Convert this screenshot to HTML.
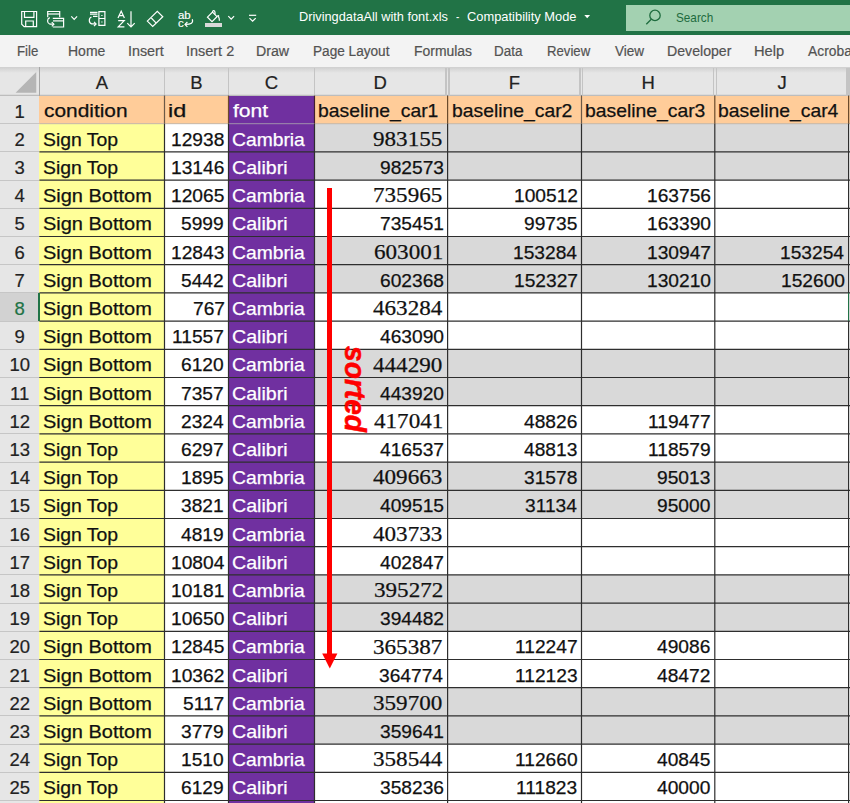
<!DOCTYPE html><html><head><meta charset="utf-8"><style>
*{margin:0;padding:0;box-sizing:border-box}
html,body{width:850px;height:803px;overflow:hidden;background:#fff}
body{position:relative;font-family:"Liberation Sans",sans-serif}
.a{position:absolute}
.t{position:absolute;white-space:nowrap;line-height:1}
.s{-webkit-text-stroke:0.25px currentColor}

</style></head><body>
<div class="a" style="left:0;top:0;width:850px;height:35px;background:#217346"></div>
<div class="a" style="left:625.5px;top:4.8px;width:240px;height:26px;background:#A3D1B1"></div>
<svg class="a" style="left:0;top:0" width="850" height="35" viewBox="0 0 850 35" fill="none" stroke="#fff" stroke-width="1.2"><path d="M21.7 11.5H36.6V26.6H24.1L21.7 24.2Z"/><path d="M24.5 11.5V17.4H33.9V11.5"/><path d="M25.7 26.6V21H33.3V26.6"/><path d="M47.7 17.2V11.5H59.7V17.2"/><path d="M47.7 14H59.7"/><path d="M52.8 18.3H63.6V27H52.8"/><path d="M53 20.9H63.6"/><path d="M49.8 17.6C46.8 18.8 46.8 23 50 24.2H54"/><path d="M51.8 22.1L53.9 24.2L51.8 26.3"/><path d="M71.3 16.4l2.9 2.9 2.9-2.9"/><path d="M90 12.4h7.5M90 14.2h7.5M93 16.4h4.5"/><path d="M98.9 11.6h6v13.8h-6z M98.9 18.5h6"/><path d="M101.9 15v1M101.9 21.5v1"/><path d="M91.5 17C88.6 18 88.5 22.8 91.7 23.9h4"/><path d="M94 21.8l2.1 2.1-2.1 2.1"/><path d="M118 18l3.2-6.8 3.2 6.8M119.2 15.6h4"/><path d="M118.2 20.6h6l-6 6.2h6.2"/><path d="M131 11.2v15.5M127.3 23.2l3.7 3.7 3.7-3.7"/><path d="M147.3 21.1L157.3 11.4L162.8 16.8L152.7 26.5Z"/><path d="M151.3 18L156 22.9"/><path d="M228.3 16.2l2.9 2.9 2.9-2.9"/><path d="M249 15.3h7.2"/><path d="M249.5 18.1l3.1 3.1 3.1-3.1"/><path d="M192.3 19.3c1.2 3.6-1.2 5.1-6.9 5.1"/><path d="M187.4 22l-2.4 2.4 2.4 2.4"/><path d="M207.5 17.2L212.5 12.2L217 16.7L212 21.7Z"/><path d="M212.5 12.2C212.3 10.2 214.8 10 215 12.4V14.6"/><path d="M218.4 16.6C219.2 17.6 219.4 19 219.4 20.8"/><circle cx="218.2" cy="16" r="1.1" fill="#fff" stroke="none"/></svg>
<div class="t" style="left:178.3px;top:10.6px;font-size:10.6px;font-weight:normal;color:#fff;line-height:8.6px;transform:scaleX(1.08);-webkit-text-stroke:0.15px #fff;transform-origin:0 0">ab<br>c</div>
<div class="a" style="left:204.9px;top:23.1px;width:17px;height:4.3px;background:#D9D9D9"></div>
<svg class="a" style="left:0;top:0" width="850" height="35" fill="none" stroke="#1E6B3E" stroke-width="1.3"><circle cx="655" cy="15.4" r="5.2"/><path d="M651.3 19.2l-5 5"/></svg>
<svg class="a" style="left:0;top:0" width="850" height="35"><path d="M584.3 15H590.1L587.2 18.2Z" fill="#fff"/></svg>
<div class="a" style="left:0;top:35px;width:850px;height:32px;background:#F3F3F3"></div>
<div class="a" style="left:0;top:67px;width:850px;height:28.5px;background:#E6E6E6"></div>
<div class="a" style="left:0;top:66.8px;width:850px;height:6px;background:linear-gradient(#CFCFCF,#E6E6E6)"></div>
<div class="a" style="left:0;top:95.5px;width:39.4px;height:707.5px;background:#E6E6E6"></div>
<svg class="a" style="left:0;top:0" width="40" height="100"><path d="M15.6 92.75L36.25 72V92.75z" fill="#B5B5B5"/></svg>
<div class="a" style="left:0;top:0"><svg width="850" height="100"><path d="M0 95.4H850" stroke="#BDBDBD" stroke-width="1.3"/></svg></div>
<div class="a" style="left:38.8px;top:68px;width:1.2px;height:27.5px;background:#C4C4C4"></div>
<div class="a" style="left:163.9px;top:68px;width:1.2px;height:27.5px;background:#C4C4C4"></div>
<div class="a" style="left:227.9px;top:68px;width:1.2px;height:27.5px;background:#C4C4C4"></div>
<div class="a" style="left:313.9px;top:68px;width:1.2px;height:27.5px;background:#C4C4C4"></div>
<div class="a" style="left:445.4px;top:68px;width:1.2px;height:27.5px;background:#C4C4C4"></div>
<div class="a" style="left:448.4px;top:68px;width:1.2px;height:27.5px;background:#C4C4C4"></div>
<div class="a" style="left:579.4px;top:68px;width:1.2px;height:27.5px;background:#C4C4C4"></div>
<div class="a" style="left:582.1999999999999px;top:68px;width:1.2px;height:27.5px;background:#C4C4C4"></div>
<div class="a" style="left:712.9px;top:68px;width:1.2px;height:27.5px;background:#C4C4C4"></div>
<div class="a" style="left:715.6999999999999px;top:68px;width:1.2px;height:27.5px;background:#C4C4C4"></div>
<div class="a" style="left:846.4px;top:68px;width:1.2px;height:27.5px;background:#C4C4C4"></div>
<div class="a" style="left:848.4px;top:68px;width:1.2px;height:27.5px;background:#C4C4C4"></div>
<div class="t" style="left:39.4px;width:125.1px;top:73.94px;text-align:center;font-size:18.5px;color:#222;-webkit-text-stroke:0.2px #222">A</div>
<div class="t" style="left:164.5px;width:64.0px;top:73.94px;text-align:center;font-size:18.5px;color:#222;-webkit-text-stroke:0.2px #222">B</div>
<div class="t" style="left:228.5px;width:86.0px;top:73.94px;text-align:center;font-size:18.5px;color:#222;-webkit-text-stroke:0.2px #222">C</div>
<div class="t" style="left:314.5px;width:131.5px;top:73.94px;text-align:center;font-size:18.5px;color:#222;-webkit-text-stroke:0.2px #222">D</div>
<div class="t" style="left:449px;width:131px;top:73.94px;text-align:center;font-size:18.5px;color:#222;-webkit-text-stroke:0.2px #222">F</div>
<div class="t" style="left:582.8px;width:130.70000000000005px;top:73.94px;text-align:center;font-size:18.5px;color:#222;-webkit-text-stroke:0.2px #222">H</div>
<div class="t" style="left:716.3px;width:131.70000000000005px;top:73.94px;text-align:center;font-size:18.5px;color:#222;-webkit-text-stroke:0.2px #222">J</div>
<div class="a" style="left:0;top:123.10000000000001px;width:39.4px;height:1.2px;background:#C6C6C6"></div>
<div class="t" style="left:0;width:39.4px;top:102.64px;text-align:center;font-size:18.5px;color:#222;-webkit-text-stroke:0.2px #222">1</div>
<div class="a" style="left:0;top:151.3px;width:39.4px;height:1.2px;background:#C6C6C6"></div>
<div class="t" style="left:0;width:39.4px;top:130.84px;text-align:center;font-size:18.5px;color:#222;-webkit-text-stroke:0.2px #222">2</div>
<div class="a" style="left:0;top:179.5px;width:39.4px;height:1.2px;background:#C6C6C6"></div>
<div class="t" style="left:0;width:39.4px;top:159.04px;text-align:center;font-size:18.5px;color:#222;-webkit-text-stroke:0.2px #222">3</div>
<div class="a" style="left:0;top:207.7px;width:39.4px;height:1.2px;background:#C6C6C6"></div>
<div class="t" style="left:0;width:39.4px;top:187.24px;text-align:center;font-size:18.5px;color:#222;-webkit-text-stroke:0.2px #222">4</div>
<div class="a" style="left:0;top:235.9px;width:39.4px;height:1.2px;background:#C6C6C6"></div>
<div class="t" style="left:0;width:39.4px;top:215.44px;text-align:center;font-size:18.5px;color:#222;-webkit-text-stroke:0.2px #222">5</div>
<div class="a" style="left:0;top:264.09999999999997px;width:39.4px;height:1.2px;background:#C6C6C6"></div>
<div class="t" style="left:0;width:39.4px;top:243.64px;text-align:center;font-size:18.5px;color:#222;-webkit-text-stroke:0.2px #222">6</div>
<div class="a" style="left:0;top:292.29999999999995px;width:39.4px;height:1.2px;background:#C6C6C6"></div>
<div class="t" style="left:0;width:39.4px;top:271.84px;text-align:center;font-size:18.5px;color:#222;-webkit-text-stroke:0.2px #222">7</div>
<div class="a" style="left:0;top:292.9px;width:39.4px;height:28.2px;background:#D2D2D2"></div>
<div class="a" style="left:0;top:320.49999999999994px;width:39.4px;height:1.2px;background:#C6C6C6"></div>
<div class="t" style="left:0;width:39.4px;top:300.04px;text-align:center;font-size:18.5px;color:#217346;-webkit-text-stroke:0.2px #217346">8</div>
<div class="a" style="left:0;top:348.7px;width:39.4px;height:1.2px;background:#C6C6C6"></div>
<div class="t" style="left:0;width:39.4px;top:328.24px;text-align:center;font-size:18.5px;color:#222;-webkit-text-stroke:0.2px #222">9</div>
<div class="a" style="left:0;top:376.8999999999999px;width:39.4px;height:1.2px;background:#C6C6C6"></div>
<div class="t" style="left:0;width:39.4px;top:356.44px;text-align:center;font-size:18.5px;color:#222;-webkit-text-stroke:0.2px #222">10</div>
<div class="a" style="left:0;top:405.09999999999997px;width:39.4px;height:1.2px;background:#C6C6C6"></div>
<div class="t" style="left:0;width:39.4px;top:384.64px;text-align:center;font-size:18.5px;color:#222;-webkit-text-stroke:0.2px #222">11</div>
<div class="a" style="left:0;top:433.29999999999995px;width:39.4px;height:1.2px;background:#C6C6C6"></div>
<div class="t" style="left:0;width:39.4px;top:412.84px;text-align:center;font-size:18.5px;color:#222;-webkit-text-stroke:0.2px #222">12</div>
<div class="a" style="left:0;top:461.49999999999994px;width:39.4px;height:1.2px;background:#C6C6C6"></div>
<div class="t" style="left:0;width:39.4px;top:441.04px;text-align:center;font-size:18.5px;color:#222;-webkit-text-stroke:0.2px #222">13</div>
<div class="a" style="left:0;top:489.69999999999993px;width:39.4px;height:1.2px;background:#C6C6C6"></div>
<div class="t" style="left:0;width:39.4px;top:469.24px;text-align:center;font-size:18.5px;color:#222;-webkit-text-stroke:0.2px #222">14</div>
<div class="a" style="left:0;top:517.9px;width:39.4px;height:1.2px;background:#C6C6C6"></div>
<div class="t" style="left:0;width:39.4px;top:497.44px;text-align:center;font-size:18.5px;color:#222;-webkit-text-stroke:0.2px #222">15</div>
<div class="a" style="left:0;top:546.1px;width:39.4px;height:1.2px;background:#C6C6C6"></div>
<div class="t" style="left:0;width:39.4px;top:525.64px;text-align:center;font-size:18.5px;color:#222;-webkit-text-stroke:0.2px #222">16</div>
<div class="a" style="left:0;top:574.3000000000001px;width:39.4px;height:1.2px;background:#C6C6C6"></div>
<div class="t" style="left:0;width:39.4px;top:553.84px;text-align:center;font-size:18.5px;color:#222;-webkit-text-stroke:0.2px #222">17</div>
<div class="a" style="left:0;top:602.5px;width:39.4px;height:1.2px;background:#C6C6C6"></div>
<div class="t" style="left:0;width:39.4px;top:582.04px;text-align:center;font-size:18.5px;color:#222;-webkit-text-stroke:0.2px #222">18</div>
<div class="a" style="left:0;top:630.6999999999999px;width:39.4px;height:1.2px;background:#C6C6C6"></div>
<div class="t" style="left:0;width:39.4px;top:610.24px;text-align:center;font-size:18.5px;color:#222;-webkit-text-stroke:0.2px #222">19</div>
<div class="a" style="left:0;top:658.9px;width:39.4px;height:1.2px;background:#C6C6C6"></div>
<div class="t" style="left:0;width:39.4px;top:638.44px;text-align:center;font-size:18.5px;color:#222;-webkit-text-stroke:0.2px #222">20</div>
<div class="a" style="left:0;top:687.1px;width:39.4px;height:1.2px;background:#C6C6C6"></div>
<div class="t" style="left:0;width:39.4px;top:666.64px;text-align:center;font-size:18.5px;color:#222;-webkit-text-stroke:0.2px #222">21</div>
<div class="a" style="left:0;top:715.3px;width:39.4px;height:1.2px;background:#C6C6C6"></div>
<div class="t" style="left:0;width:39.4px;top:694.84px;text-align:center;font-size:18.5px;color:#222;-webkit-text-stroke:0.2px #222">22</div>
<div class="a" style="left:0;top:743.5px;width:39.4px;height:1.2px;background:#C6C6C6"></div>
<div class="t" style="left:0;width:39.4px;top:723.04px;text-align:center;font-size:18.5px;color:#222;-webkit-text-stroke:0.2px #222">23</div>
<div class="a" style="left:0;top:771.7px;width:39.4px;height:1.2px;background:#C6C6C6"></div>
<div class="t" style="left:0;width:39.4px;top:751.24px;text-align:center;font-size:18.5px;color:#222;-webkit-text-stroke:0.2px #222">24</div>
<div class="a" style="left:0;top:799.9px;width:39.4px;height:1.2px;background:#C6C6C6"></div>
<div class="t" style="left:0;width:39.4px;top:779.44px;text-align:center;font-size:18.5px;color:#222;-webkit-text-stroke:0.2px #222">25</div>
<div class="a" style="left:39px;top:67px;width:1px;height:736px;background:#A6A6A6"></div>
<div class="a" style="left:39.4px;top:95.5px;width:125.1px;height:28.2px;background:#FFCC99"></div>
<div class="a" style="left:164.5px;top:95.5px;width:64.0px;height:28.2px;background:#FFCC99"></div>
<div class="a" style="left:228.5px;top:95.5px;width:86.0px;height:28.2px;background:#7030A0"></div>
<div class="a" style="left:314.5px;top:95.5px;width:133.10000000000002px;height:28.2px;background:#FFCC99"></div>
<div class="a" style="left:447.6px;top:95.5px;width:133.89999999999998px;height:28.2px;background:#FFCC99"></div>
<div class="a" style="left:581.5px;top:95.5px;width:133.29999999999995px;height:28.2px;background:#FFCC99"></div>
<div class="a" style="left:714.8px;top:95.5px;width:133.80000000000007px;height:28.2px;background:#FFCC99"></div>
<div class="a" style="left:848.6px;top:95.5px;width:141.39999999999998px;height:28.2px;background:#FFCC99"></div>
<div class="a" style="left:39.4px;top:123.7px;width:125.1px;height:28.2px;background:#FFFF99"></div>
<div class="a" style="left:164.5px;top:123.7px;width:64.0px;height:28.2px;background:#FFFFFF"></div>
<div class="a" style="left:228.5px;top:123.7px;width:86.0px;height:28.2px;background:#7030A0"></div>
<div class="a" style="left:314.5px;top:123.7px;width:133.10000000000002px;height:28.2px;background:#D9D9D9"></div>
<div class="a" style="left:447.6px;top:123.7px;width:133.89999999999998px;height:28.2px;background:#D9D9D9"></div>
<div class="a" style="left:581.5px;top:123.7px;width:133.29999999999995px;height:28.2px;background:#D9D9D9"></div>
<div class="a" style="left:714.8px;top:123.7px;width:133.80000000000007px;height:28.2px;background:#D9D9D9"></div>
<div class="a" style="left:848.6px;top:123.7px;width:141.39999999999998px;height:28.2px;background:#FFFFFF"></div>
<div class="a" style="left:39.4px;top:151.9px;width:125.1px;height:28.2px;background:#FFFF99"></div>
<div class="a" style="left:164.5px;top:151.9px;width:64.0px;height:28.2px;background:#FFFFFF"></div>
<div class="a" style="left:228.5px;top:151.9px;width:86.0px;height:28.2px;background:#7030A0"></div>
<div class="a" style="left:314.5px;top:151.9px;width:133.10000000000002px;height:28.2px;background:#D9D9D9"></div>
<div class="a" style="left:447.6px;top:151.9px;width:133.89999999999998px;height:28.2px;background:#D9D9D9"></div>
<div class="a" style="left:581.5px;top:151.9px;width:133.29999999999995px;height:28.2px;background:#D9D9D9"></div>
<div class="a" style="left:714.8px;top:151.9px;width:133.80000000000007px;height:28.2px;background:#D9D9D9"></div>
<div class="a" style="left:848.6px;top:151.9px;width:141.39999999999998px;height:28.2px;background:#FFFFFF"></div>
<div class="a" style="left:39.4px;top:180.1px;width:125.1px;height:28.2px;background:#FFFF99"></div>
<div class="a" style="left:164.5px;top:180.1px;width:64.0px;height:28.2px;background:#FFFFFF"></div>
<div class="a" style="left:228.5px;top:180.1px;width:86.0px;height:28.2px;background:#7030A0"></div>
<div class="a" style="left:314.5px;top:180.1px;width:133.10000000000002px;height:28.2px;background:#FFFFFF"></div>
<div class="a" style="left:447.6px;top:180.1px;width:133.89999999999998px;height:28.2px;background:#FFFFFF"></div>
<div class="a" style="left:581.5px;top:180.1px;width:133.29999999999995px;height:28.2px;background:#FFFFFF"></div>
<div class="a" style="left:714.8px;top:180.1px;width:133.80000000000007px;height:28.2px;background:#FFFFFF"></div>
<div class="a" style="left:848.6px;top:180.1px;width:141.39999999999998px;height:28.2px;background:#FFFFFF"></div>
<div class="a" style="left:39.4px;top:208.3px;width:125.1px;height:28.2px;background:#FFFF99"></div>
<div class="a" style="left:164.5px;top:208.3px;width:64.0px;height:28.2px;background:#FFFFFF"></div>
<div class="a" style="left:228.5px;top:208.3px;width:86.0px;height:28.2px;background:#7030A0"></div>
<div class="a" style="left:314.5px;top:208.3px;width:133.10000000000002px;height:28.2px;background:#FFFFFF"></div>
<div class="a" style="left:447.6px;top:208.3px;width:133.89999999999998px;height:28.2px;background:#FFFFFF"></div>
<div class="a" style="left:581.5px;top:208.3px;width:133.29999999999995px;height:28.2px;background:#FFFFFF"></div>
<div class="a" style="left:714.8px;top:208.3px;width:133.80000000000007px;height:28.2px;background:#FFFFFF"></div>
<div class="a" style="left:848.6px;top:208.3px;width:141.39999999999998px;height:28.2px;background:#FFFFFF"></div>
<div class="a" style="left:39.4px;top:236.5px;width:125.1px;height:28.2px;background:#FFFF99"></div>
<div class="a" style="left:164.5px;top:236.5px;width:64.0px;height:28.2px;background:#FFFFFF"></div>
<div class="a" style="left:228.5px;top:236.5px;width:86.0px;height:28.2px;background:#7030A0"></div>
<div class="a" style="left:314.5px;top:236.5px;width:133.10000000000002px;height:28.2px;background:#D9D9D9"></div>
<div class="a" style="left:447.6px;top:236.5px;width:133.89999999999998px;height:28.2px;background:#D9D9D9"></div>
<div class="a" style="left:581.5px;top:236.5px;width:133.29999999999995px;height:28.2px;background:#D9D9D9"></div>
<div class="a" style="left:714.8px;top:236.5px;width:133.80000000000007px;height:28.2px;background:#D9D9D9"></div>
<div class="a" style="left:848.6px;top:236.5px;width:141.39999999999998px;height:28.2px;background:#FFFFFF"></div>
<div class="a" style="left:39.4px;top:264.7px;width:125.1px;height:28.2px;background:#FFFF99"></div>
<div class="a" style="left:164.5px;top:264.7px;width:64.0px;height:28.2px;background:#FFFFFF"></div>
<div class="a" style="left:228.5px;top:264.7px;width:86.0px;height:28.2px;background:#7030A0"></div>
<div class="a" style="left:314.5px;top:264.7px;width:133.10000000000002px;height:28.2px;background:#D9D9D9"></div>
<div class="a" style="left:447.6px;top:264.7px;width:133.89999999999998px;height:28.2px;background:#D9D9D9"></div>
<div class="a" style="left:581.5px;top:264.7px;width:133.29999999999995px;height:28.2px;background:#D9D9D9"></div>
<div class="a" style="left:714.8px;top:264.7px;width:133.80000000000007px;height:28.2px;background:#D9D9D9"></div>
<div class="a" style="left:848.6px;top:264.7px;width:141.39999999999998px;height:28.2px;background:#FFFFFF"></div>
<div class="a" style="left:39.4px;top:292.9px;width:125.1px;height:28.2px;background:#FFFF99"></div>
<div class="a" style="left:164.5px;top:292.9px;width:64.0px;height:28.2px;background:#FFFFFF"></div>
<div class="a" style="left:228.5px;top:292.9px;width:86.0px;height:28.2px;background:#7030A0"></div>
<div class="a" style="left:314.5px;top:292.9px;width:133.10000000000002px;height:28.2px;background:#FFFFFF"></div>
<div class="a" style="left:447.6px;top:292.9px;width:133.89999999999998px;height:28.2px;background:#FFFFFF"></div>
<div class="a" style="left:581.5px;top:292.9px;width:133.29999999999995px;height:28.2px;background:#FFFFFF"></div>
<div class="a" style="left:714.8px;top:292.9px;width:133.80000000000007px;height:28.2px;background:#FFFFFF"></div>
<div class="a" style="left:848.6px;top:292.9px;width:141.39999999999998px;height:28.2px;background:#FFFFFF"></div>
<div class="a" style="left:39.4px;top:321.1px;width:125.1px;height:28.2px;background:#FFFF99"></div>
<div class="a" style="left:164.5px;top:321.1px;width:64.0px;height:28.2px;background:#FFFFFF"></div>
<div class="a" style="left:228.5px;top:321.1px;width:86.0px;height:28.2px;background:#7030A0"></div>
<div class="a" style="left:314.5px;top:321.1px;width:133.10000000000002px;height:28.2px;background:#FFFFFF"></div>
<div class="a" style="left:447.6px;top:321.1px;width:133.89999999999998px;height:28.2px;background:#FFFFFF"></div>
<div class="a" style="left:581.5px;top:321.1px;width:133.29999999999995px;height:28.2px;background:#FFFFFF"></div>
<div class="a" style="left:714.8px;top:321.1px;width:133.80000000000007px;height:28.2px;background:#FFFFFF"></div>
<div class="a" style="left:848.6px;top:321.1px;width:141.39999999999998px;height:28.2px;background:#FFFFFF"></div>
<div class="a" style="left:39.4px;top:349.29999999999995px;width:125.1px;height:28.2px;background:#FFFF99"></div>
<div class="a" style="left:164.5px;top:349.29999999999995px;width:64.0px;height:28.2px;background:#FFFFFF"></div>
<div class="a" style="left:228.5px;top:349.29999999999995px;width:86.0px;height:28.2px;background:#7030A0"></div>
<div class="a" style="left:314.5px;top:349.29999999999995px;width:133.10000000000002px;height:28.2px;background:#D9D9D9"></div>
<div class="a" style="left:447.6px;top:349.29999999999995px;width:133.89999999999998px;height:28.2px;background:#D9D9D9"></div>
<div class="a" style="left:581.5px;top:349.29999999999995px;width:133.29999999999995px;height:28.2px;background:#D9D9D9"></div>
<div class="a" style="left:714.8px;top:349.29999999999995px;width:133.80000000000007px;height:28.2px;background:#D9D9D9"></div>
<div class="a" style="left:848.6px;top:349.29999999999995px;width:141.39999999999998px;height:28.2px;background:#FFFFFF"></div>
<div class="a" style="left:39.4px;top:377.5px;width:125.1px;height:28.2px;background:#FFFF99"></div>
<div class="a" style="left:164.5px;top:377.5px;width:64.0px;height:28.2px;background:#FFFFFF"></div>
<div class="a" style="left:228.5px;top:377.5px;width:86.0px;height:28.2px;background:#7030A0"></div>
<div class="a" style="left:314.5px;top:377.5px;width:133.10000000000002px;height:28.2px;background:#D9D9D9"></div>
<div class="a" style="left:447.6px;top:377.5px;width:133.89999999999998px;height:28.2px;background:#D9D9D9"></div>
<div class="a" style="left:581.5px;top:377.5px;width:133.29999999999995px;height:28.2px;background:#D9D9D9"></div>
<div class="a" style="left:714.8px;top:377.5px;width:133.80000000000007px;height:28.2px;background:#D9D9D9"></div>
<div class="a" style="left:848.6px;top:377.5px;width:141.39999999999998px;height:28.2px;background:#FFFFFF"></div>
<div class="a" style="left:39.4px;top:405.7px;width:125.1px;height:28.2px;background:#FFFF99"></div>
<div class="a" style="left:164.5px;top:405.7px;width:64.0px;height:28.2px;background:#FFFFFF"></div>
<div class="a" style="left:228.5px;top:405.7px;width:86.0px;height:28.2px;background:#7030A0"></div>
<div class="a" style="left:314.5px;top:405.7px;width:133.10000000000002px;height:28.2px;background:#FFFFFF"></div>
<div class="a" style="left:447.6px;top:405.7px;width:133.89999999999998px;height:28.2px;background:#FFFFFF"></div>
<div class="a" style="left:581.5px;top:405.7px;width:133.29999999999995px;height:28.2px;background:#FFFFFF"></div>
<div class="a" style="left:714.8px;top:405.7px;width:133.80000000000007px;height:28.2px;background:#FFFFFF"></div>
<div class="a" style="left:848.6px;top:405.7px;width:141.39999999999998px;height:28.2px;background:#FFFFFF"></div>
<div class="a" style="left:39.4px;top:433.9px;width:125.1px;height:28.2px;background:#FFFF99"></div>
<div class="a" style="left:164.5px;top:433.9px;width:64.0px;height:28.2px;background:#FFFFFF"></div>
<div class="a" style="left:228.5px;top:433.9px;width:86.0px;height:28.2px;background:#7030A0"></div>
<div class="a" style="left:314.5px;top:433.9px;width:133.10000000000002px;height:28.2px;background:#FFFFFF"></div>
<div class="a" style="left:447.6px;top:433.9px;width:133.89999999999998px;height:28.2px;background:#FFFFFF"></div>
<div class="a" style="left:581.5px;top:433.9px;width:133.29999999999995px;height:28.2px;background:#FFFFFF"></div>
<div class="a" style="left:714.8px;top:433.9px;width:133.80000000000007px;height:28.2px;background:#FFFFFF"></div>
<div class="a" style="left:848.6px;top:433.9px;width:141.39999999999998px;height:28.2px;background:#FFFFFF"></div>
<div class="a" style="left:39.4px;top:462.09999999999997px;width:125.1px;height:28.2px;background:#FFFF99"></div>
<div class="a" style="left:164.5px;top:462.09999999999997px;width:64.0px;height:28.2px;background:#FFFFFF"></div>
<div class="a" style="left:228.5px;top:462.09999999999997px;width:86.0px;height:28.2px;background:#7030A0"></div>
<div class="a" style="left:314.5px;top:462.09999999999997px;width:133.10000000000002px;height:28.2px;background:#D9D9D9"></div>
<div class="a" style="left:447.6px;top:462.09999999999997px;width:133.89999999999998px;height:28.2px;background:#D9D9D9"></div>
<div class="a" style="left:581.5px;top:462.09999999999997px;width:133.29999999999995px;height:28.2px;background:#D9D9D9"></div>
<div class="a" style="left:714.8px;top:462.09999999999997px;width:133.80000000000007px;height:28.2px;background:#D9D9D9"></div>
<div class="a" style="left:848.6px;top:462.09999999999997px;width:141.39999999999998px;height:28.2px;background:#FFFFFF"></div>
<div class="a" style="left:39.4px;top:490.3px;width:125.1px;height:28.2px;background:#FFFF99"></div>
<div class="a" style="left:164.5px;top:490.3px;width:64.0px;height:28.2px;background:#FFFFFF"></div>
<div class="a" style="left:228.5px;top:490.3px;width:86.0px;height:28.2px;background:#7030A0"></div>
<div class="a" style="left:314.5px;top:490.3px;width:133.10000000000002px;height:28.2px;background:#D9D9D9"></div>
<div class="a" style="left:447.6px;top:490.3px;width:133.89999999999998px;height:28.2px;background:#D9D9D9"></div>
<div class="a" style="left:581.5px;top:490.3px;width:133.29999999999995px;height:28.2px;background:#D9D9D9"></div>
<div class="a" style="left:714.8px;top:490.3px;width:133.80000000000007px;height:28.2px;background:#D9D9D9"></div>
<div class="a" style="left:848.6px;top:490.3px;width:141.39999999999998px;height:28.2px;background:#FFFFFF"></div>
<div class="a" style="left:39.4px;top:518.5px;width:125.1px;height:28.2px;background:#FFFF99"></div>
<div class="a" style="left:164.5px;top:518.5px;width:64.0px;height:28.2px;background:#FFFFFF"></div>
<div class="a" style="left:228.5px;top:518.5px;width:86.0px;height:28.2px;background:#7030A0"></div>
<div class="a" style="left:314.5px;top:518.5px;width:133.10000000000002px;height:28.2px;background:#FFFFFF"></div>
<div class="a" style="left:447.6px;top:518.5px;width:133.89999999999998px;height:28.2px;background:#FFFFFF"></div>
<div class="a" style="left:581.5px;top:518.5px;width:133.29999999999995px;height:28.2px;background:#FFFFFF"></div>
<div class="a" style="left:714.8px;top:518.5px;width:133.80000000000007px;height:28.2px;background:#FFFFFF"></div>
<div class="a" style="left:848.6px;top:518.5px;width:141.39999999999998px;height:28.2px;background:#FFFFFF"></div>
<div class="a" style="left:39.4px;top:546.7px;width:125.1px;height:28.2px;background:#FFFF99"></div>
<div class="a" style="left:164.5px;top:546.7px;width:64.0px;height:28.2px;background:#FFFFFF"></div>
<div class="a" style="left:228.5px;top:546.7px;width:86.0px;height:28.2px;background:#7030A0"></div>
<div class="a" style="left:314.5px;top:546.7px;width:133.10000000000002px;height:28.2px;background:#FFFFFF"></div>
<div class="a" style="left:447.6px;top:546.7px;width:133.89999999999998px;height:28.2px;background:#FFFFFF"></div>
<div class="a" style="left:581.5px;top:546.7px;width:133.29999999999995px;height:28.2px;background:#FFFFFF"></div>
<div class="a" style="left:714.8px;top:546.7px;width:133.80000000000007px;height:28.2px;background:#FFFFFF"></div>
<div class="a" style="left:848.6px;top:546.7px;width:141.39999999999998px;height:28.2px;background:#FFFFFF"></div>
<div class="a" style="left:39.4px;top:574.9px;width:125.1px;height:28.2px;background:#FFFF99"></div>
<div class="a" style="left:164.5px;top:574.9px;width:64.0px;height:28.2px;background:#FFFFFF"></div>
<div class="a" style="left:228.5px;top:574.9px;width:86.0px;height:28.2px;background:#7030A0"></div>
<div class="a" style="left:314.5px;top:574.9px;width:133.10000000000002px;height:28.2px;background:#D9D9D9"></div>
<div class="a" style="left:447.6px;top:574.9px;width:133.89999999999998px;height:28.2px;background:#D9D9D9"></div>
<div class="a" style="left:581.5px;top:574.9px;width:133.29999999999995px;height:28.2px;background:#D9D9D9"></div>
<div class="a" style="left:714.8px;top:574.9px;width:133.80000000000007px;height:28.2px;background:#D9D9D9"></div>
<div class="a" style="left:848.6px;top:574.9px;width:141.39999999999998px;height:28.2px;background:#FFFFFF"></div>
<div class="a" style="left:39.4px;top:603.0999999999999px;width:125.1px;height:28.2px;background:#FFFF99"></div>
<div class="a" style="left:164.5px;top:603.0999999999999px;width:64.0px;height:28.2px;background:#FFFFFF"></div>
<div class="a" style="left:228.5px;top:603.0999999999999px;width:86.0px;height:28.2px;background:#7030A0"></div>
<div class="a" style="left:314.5px;top:603.0999999999999px;width:133.10000000000002px;height:28.2px;background:#D9D9D9"></div>
<div class="a" style="left:447.6px;top:603.0999999999999px;width:133.89999999999998px;height:28.2px;background:#D9D9D9"></div>
<div class="a" style="left:581.5px;top:603.0999999999999px;width:133.29999999999995px;height:28.2px;background:#D9D9D9"></div>
<div class="a" style="left:714.8px;top:603.0999999999999px;width:133.80000000000007px;height:28.2px;background:#D9D9D9"></div>
<div class="a" style="left:848.6px;top:603.0999999999999px;width:141.39999999999998px;height:28.2px;background:#FFFFFF"></div>
<div class="a" style="left:39.4px;top:631.3px;width:125.1px;height:28.2px;background:#FFFF99"></div>
<div class="a" style="left:164.5px;top:631.3px;width:64.0px;height:28.2px;background:#FFFFFF"></div>
<div class="a" style="left:228.5px;top:631.3px;width:86.0px;height:28.2px;background:#7030A0"></div>
<div class="a" style="left:314.5px;top:631.3px;width:133.10000000000002px;height:28.2px;background:#FFFFFF"></div>
<div class="a" style="left:447.6px;top:631.3px;width:133.89999999999998px;height:28.2px;background:#FFFFFF"></div>
<div class="a" style="left:581.5px;top:631.3px;width:133.29999999999995px;height:28.2px;background:#FFFFFF"></div>
<div class="a" style="left:714.8px;top:631.3px;width:133.80000000000007px;height:28.2px;background:#FFFFFF"></div>
<div class="a" style="left:848.6px;top:631.3px;width:141.39999999999998px;height:28.2px;background:#FFFFFF"></div>
<div class="a" style="left:39.4px;top:659.5px;width:125.1px;height:28.2px;background:#FFFF99"></div>
<div class="a" style="left:164.5px;top:659.5px;width:64.0px;height:28.2px;background:#FFFFFF"></div>
<div class="a" style="left:228.5px;top:659.5px;width:86.0px;height:28.2px;background:#7030A0"></div>
<div class="a" style="left:314.5px;top:659.5px;width:133.10000000000002px;height:28.2px;background:#FFFFFF"></div>
<div class="a" style="left:447.6px;top:659.5px;width:133.89999999999998px;height:28.2px;background:#FFFFFF"></div>
<div class="a" style="left:581.5px;top:659.5px;width:133.29999999999995px;height:28.2px;background:#FFFFFF"></div>
<div class="a" style="left:714.8px;top:659.5px;width:133.80000000000007px;height:28.2px;background:#FFFFFF"></div>
<div class="a" style="left:848.6px;top:659.5px;width:141.39999999999998px;height:28.2px;background:#FFFFFF"></div>
<div class="a" style="left:39.4px;top:687.6999999999999px;width:125.1px;height:28.2px;background:#FFFF99"></div>
<div class="a" style="left:164.5px;top:687.6999999999999px;width:64.0px;height:28.2px;background:#FFFFFF"></div>
<div class="a" style="left:228.5px;top:687.6999999999999px;width:86.0px;height:28.2px;background:#7030A0"></div>
<div class="a" style="left:314.5px;top:687.6999999999999px;width:133.10000000000002px;height:28.2px;background:#D9D9D9"></div>
<div class="a" style="left:447.6px;top:687.6999999999999px;width:133.89999999999998px;height:28.2px;background:#D9D9D9"></div>
<div class="a" style="left:581.5px;top:687.6999999999999px;width:133.29999999999995px;height:28.2px;background:#D9D9D9"></div>
<div class="a" style="left:714.8px;top:687.6999999999999px;width:133.80000000000007px;height:28.2px;background:#D9D9D9"></div>
<div class="a" style="left:848.6px;top:687.6999999999999px;width:141.39999999999998px;height:28.2px;background:#FFFFFF"></div>
<div class="a" style="left:39.4px;top:715.9px;width:125.1px;height:28.2px;background:#FFFF99"></div>
<div class="a" style="left:164.5px;top:715.9px;width:64.0px;height:28.2px;background:#FFFFFF"></div>
<div class="a" style="left:228.5px;top:715.9px;width:86.0px;height:28.2px;background:#7030A0"></div>
<div class="a" style="left:314.5px;top:715.9px;width:133.10000000000002px;height:28.2px;background:#D9D9D9"></div>
<div class="a" style="left:447.6px;top:715.9px;width:133.89999999999998px;height:28.2px;background:#D9D9D9"></div>
<div class="a" style="left:581.5px;top:715.9px;width:133.29999999999995px;height:28.2px;background:#D9D9D9"></div>
<div class="a" style="left:714.8px;top:715.9px;width:133.80000000000007px;height:28.2px;background:#D9D9D9"></div>
<div class="a" style="left:848.6px;top:715.9px;width:141.39999999999998px;height:28.2px;background:#FFFFFF"></div>
<div class="a" style="left:39.4px;top:744.1px;width:125.1px;height:28.2px;background:#FFFF99"></div>
<div class="a" style="left:164.5px;top:744.1px;width:64.0px;height:28.2px;background:#FFFFFF"></div>
<div class="a" style="left:228.5px;top:744.1px;width:86.0px;height:28.2px;background:#7030A0"></div>
<div class="a" style="left:314.5px;top:744.1px;width:133.10000000000002px;height:28.2px;background:#FFFFFF"></div>
<div class="a" style="left:447.6px;top:744.1px;width:133.89999999999998px;height:28.2px;background:#FFFFFF"></div>
<div class="a" style="left:581.5px;top:744.1px;width:133.29999999999995px;height:28.2px;background:#FFFFFF"></div>
<div class="a" style="left:714.8px;top:744.1px;width:133.80000000000007px;height:28.2px;background:#FFFFFF"></div>
<div class="a" style="left:848.6px;top:744.1px;width:141.39999999999998px;height:28.2px;background:#FFFFFF"></div>
<div class="a" style="left:39.4px;top:772.3px;width:125.1px;height:28.2px;background:#FFFF99"></div>
<div class="a" style="left:164.5px;top:772.3px;width:64.0px;height:28.2px;background:#FFFFFF"></div>
<div class="a" style="left:228.5px;top:772.3px;width:86.0px;height:28.2px;background:#7030A0"></div>
<div class="a" style="left:314.5px;top:772.3px;width:133.10000000000002px;height:28.2px;background:#FFFFFF"></div>
<div class="a" style="left:447.6px;top:772.3px;width:133.89999999999998px;height:28.2px;background:#FFFFFF"></div>
<div class="a" style="left:581.5px;top:772.3px;width:133.29999999999995px;height:28.2px;background:#FFFFFF"></div>
<div class="a" style="left:714.8px;top:772.3px;width:133.80000000000007px;height:28.2px;background:#FFFFFF"></div>
<div class="a" style="left:848.6px;top:772.3px;width:141.39999999999998px;height:28.2px;background:#FFFFFF"></div>
<div class="a" style="left:39.4px;top:800.5px;width:125.1px;height:5px;background:#FFFF99"></div>
<div class="a" style="left:164.5px;top:800.5px;width:64.0px;height:5px;background:#FFFFFF"></div>
<div class="a" style="left:228.5px;top:800.5px;width:86.0px;height:5px;background:#7030A0"></div>
<div class="a" style="left:314.5px;top:800.5px;width:133.10000000000002px;height:5px;background:#FFFFFF"></div>
<div class="a" style="left:447.6px;top:800.5px;width:133.89999999999998px;height:5px;background:#FFFFFF"></div>
<div class="a" style="left:581.5px;top:800.5px;width:133.29999999999995px;height:5px;background:#FFFFFF"></div>
<div class="a" style="left:714.8px;top:800.5px;width:133.80000000000007px;height:5px;background:#FFFFFF"></div>
<div class="a" style="left:848.6px;top:800.5px;width:141.39999999999998px;height:5px;background:#FFFFFF"></div>
<svg class="a" style="left:0;top:0" width="850" height="803" fill="none"><path d="M39.4 123.70H850" stroke="rgba(176,176,176,0.6)" stroke-width="1.3"/><path d="M39.4 151.90H850" stroke="#2e2e2e" stroke-width="1.2"/><path d="M39.4 180.10H850" stroke="#2e2e2e" stroke-width="1.2"/><path d="M39.4 208.30H850" stroke="#2e2e2e" stroke-width="1.2"/><path d="M39.4 236.50H850" stroke="#2e2e2e" stroke-width="1.2"/><path d="M39.4 264.70H850" stroke="#2e2e2e" stroke-width="1.2"/><path d="M39.4 292.90H850" stroke="#2e2e2e" stroke-width="1.2"/><path d="M39.4 321.10H850" stroke="#2e2e2e" stroke-width="1.2"/><path d="M39.4 349.30H850" stroke="#2e2e2e" stroke-width="1.2"/><path d="M39.4 377.50H850" stroke="#2e2e2e" stroke-width="1.2"/><path d="M39.4 405.70H850" stroke="#2e2e2e" stroke-width="1.2"/><path d="M39.4 433.90H850" stroke="#2e2e2e" stroke-width="1.2"/><path d="M39.4 462.10H850" stroke="#2e2e2e" stroke-width="1.2"/><path d="M39.4 490.30H850" stroke="#2e2e2e" stroke-width="1.2"/><path d="M39.4 518.50H850" stroke="#2e2e2e" stroke-width="1.2"/><path d="M39.4 546.70H850" stroke="#2e2e2e" stroke-width="1.2"/><path d="M39.4 574.90H850" stroke="#2e2e2e" stroke-width="1.2"/><path d="M39.4 603.10H850" stroke="#2e2e2e" stroke-width="1.2"/><path d="M39.4 631.30H850" stroke="#2e2e2e" stroke-width="1.2"/><path d="M39.4 659.50H850" stroke="#2e2e2e" stroke-width="1.2"/><path d="M39.4 687.70H850" stroke="#2e2e2e" stroke-width="1.2"/><path d="M39.4 715.90H850" stroke="#2e2e2e" stroke-width="1.2"/><path d="M39.4 744.10H850" stroke="#2e2e2e" stroke-width="1.2"/><path d="M39.4 772.30H850" stroke="#2e2e2e" stroke-width="1.2"/><path d="M39.4 800.50H850" stroke="#2e2e2e" stroke-width="1.2"/><path d="M164.5 95.5V123.7" stroke="rgba(50,25,0,0.72)" stroke-width="1.2"/><path d="M164.5 123.7V803" stroke="#2e2e2e" stroke-width="1.2"/><path d="M228.5 95.5V123.7" stroke="rgba(50,25,0,0.72)" stroke-width="1.2"/><path d="M228.5 123.7V803" stroke="#2e2e2e" stroke-width="1.2"/><path d="M314.5 95.5V123.7" stroke="rgba(50,25,0,0.72)" stroke-width="1.2"/><path d="M314.5 123.7V803" stroke="#2e2e2e" stroke-width="1.2"/><path d="M447.6 95.5V123.7" stroke="rgba(50,25,0,0.72)" stroke-width="1.2"/><path d="M447.6 123.7V803" stroke="#2e2e2e" stroke-width="1.2"/><path d="M581.5 95.5V123.7" stroke="rgba(50,25,0,0.72)" stroke-width="1.2"/><path d="M581.5 123.7V803" stroke="#2e2e2e" stroke-width="1.2"/><path d="M714.8 95.5V123.7" stroke="rgba(50,25,0,0.72)" stroke-width="1.2"/><path d="M714.8 123.7V803" stroke="#2e2e2e" stroke-width="1.2"/><path d="M848.6 95.5V123.7" stroke="rgba(50,25,0,0.72)" stroke-width="1.2"/><path d="M848.6 123.7V803" stroke="#2e2e2e" stroke-width="1.2"/></svg>
<div class="a" style="left:38.2px;top:292.9px;width:1.8px;height:28.2px;background:#217346"></div>
<div class="a" style="left:847.7px;top:292.9px;width:1.8px;height:28.2px;background:#217346"></div>
<div class="t" style="left:675.91px;top:11.23px;font-family:'Liberation Sans';font-size:13.2px;font-weight:normal;font-style:normal;color:#1E6B3E;transform:scaleX(0.8900);transform-origin:0 0;">Search</div>
<div class="t" style="left:299.03px;top:9.83px;font-family:'Liberation Sans';font-size:13.2px;font-weight:normal;font-style:normal;color:#fff;transform:scaleX(0.9673);transform-origin:0 0;">DrivingdataAll with font.xls</div>
<div class="t" style="left:456.00px;top:9.83px;font-family:'Liberation Sans';font-size:13.2px;font-weight:normal;font-style:normal;color:#fff;transform:scaleX(0.7500);transform-origin:0 0;">-</div>
<div class="t" style="left:467.00px;top:9.83px;font-family:'Liberation Sans';font-size:13.2px;font-weight:normal;font-style:normal;color:#fff;transform:scaleX(0.9768);transform-origin:0 0;">Compatibility Mode</div>
<div class="t" style="left:16.84px;top:44.52px;font-family:'Liberation Sans';font-size:13.8px;font-weight:normal;font-style:normal;color:#525252;transform:scaleX(0.9571);transform-origin:0 0;-webkit-text-stroke:0.2px #525252;">File</div>
<div class="t" style="left:67.89px;top:44.52px;font-family:'Liberation Sans';font-size:13.8px;font-weight:normal;font-style:normal;color:#525252;transform:scaleX(1.0139);transform-origin:0 0;-webkit-text-stroke:0.2px #525252;">Home</div>
<div class="t" style="left:128.36px;top:44.52px;font-family:'Liberation Sans';font-size:13.8px;font-weight:normal;font-style:normal;color:#525252;transform:scaleX(1.0382);transform-origin:0 0;-webkit-text-stroke:0.2px #525252;">Insert</div>
<div class="t" style="left:186.45px;top:44.52px;font-family:'Liberation Sans';font-size:13.8px;font-weight:normal;font-style:normal;color:#525252;transform:scaleX(1.0467);transform-origin:0 0;-webkit-text-stroke:0.2px #525252;">Insert 2</div>
<div class="t" style="left:256.17px;top:44.52px;font-family:'Liberation Sans';font-size:13.8px;font-weight:normal;font-style:normal;color:#525252;transform:scaleX(1.0281);transform-origin:0 0;-webkit-text-stroke:0.2px #525252;">Draw</div>
<div class="t" style="left:313.11px;top:44.52px;font-family:'Liberation Sans';font-size:13.8px;font-weight:normal;font-style:normal;color:#525252;transform:scaleX(0.9870);transform-origin:0 0;-webkit-text-stroke:0.2px #525252;">Page Layout</div>
<div class="t" style="left:413.79px;top:44.52px;font-family:'Liberation Sans';font-size:13.8px;font-weight:normal;font-style:normal;color:#525252;transform:scaleX(1.0089);transform-origin:0 0;-webkit-text-stroke:0.2px #525252;">Formulas</div>
<div class="t" style="left:494.33px;top:44.52px;font-family:'Liberation Sans';font-size:13.8px;font-weight:normal;font-style:normal;color:#525252;transform:scaleX(0.9724);transform-origin:0 0;-webkit-text-stroke:0.2px #525252;">Data</div>
<div class="t" style="left:547.25px;top:44.52px;font-family:'Liberation Sans';font-size:13.8px;font-weight:normal;font-style:normal;color:#525252;transform:scaleX(0.9533);transform-origin:0 0;-webkit-text-stroke:0.2px #525252;">Review</div>
<div class="t" style="left:615.30px;top:44.52px;font-family:'Liberation Sans';font-size:13.8px;font-weight:normal;font-style:normal;color:#525252;transform:scaleX(0.9800);transform-origin:0 0;-webkit-text-stroke:0.2px #525252;">View</div>
<div class="t" style="left:667.38px;top:44.52px;font-family:'Liberation Sans';font-size:13.8px;font-weight:normal;font-style:normal;color:#525252;transform:scaleX(1.0242);transform-origin:0 0;-webkit-text-stroke:0.2px #525252;">Developer</div>
<div class="t" style="left:754.34px;top:44.52px;font-family:'Liberation Sans';font-size:13.8px;font-weight:normal;font-style:normal;color:#525252;transform:scaleX(1.0630);transform-origin:0 0;-webkit-text-stroke:0.2px #525252;">Help</div>
<div class="t" style="left:808.10px;top:44.52px;font-family:'Liberation Sans';font-size:13.8px;font-weight:normal;font-style:normal;color:#525252;-webkit-text-stroke:0.2px #525252;">Acrobat</div>
<div class="t s" style="left:43.80px;top:102.04px;font-family:'Liberation Sans';font-size:18.5px;font-weight:normal;font-style:normal;color:#111;transform:scaleX(1.1288);transform-origin:0 0;">condition</div>
<div class="t s" style="left:167.63px;top:102.04px;font-family:'Liberation Sans';font-size:18.5px;font-weight:normal;font-style:normal;color:#111;transform:scaleX(1.2667);transform-origin:0 0;">id</div>
<div class="t s" style="left:233.10px;top:102.04px;font-family:'Liberation Sans';font-size:18.5px;font-weight:normal;font-style:normal;color:#fff;transform:scaleX(1.1419);transform-origin:0 0;">font</div>
<div class="t s" style="left:318.06px;top:102.04px;font-family:'Liberation Sans';font-size:18.5px;font-weight:normal;font-style:normal;color:#111;transform:scaleX(1.0447);transform-origin:0 0;">baseline_car1</div>
<div class="t s" style="left:451.56px;top:102.04px;font-family:'Liberation Sans';font-size:18.5px;font-weight:normal;font-style:normal;color:#111;transform:scaleX(1.0447);transform-origin:0 0;">baseline_car2</div>
<div class="t s" style="left:585.16px;top:102.04px;font-family:'Liberation Sans';font-size:18.5px;font-weight:normal;font-style:normal;color:#111;transform:scaleX(1.0447);transform-origin:0 0;">baseline_car3</div>
<div class="t s" style="left:718.46px;top:102.04px;font-family:'Liberation Sans';font-size:18.5px;font-weight:normal;font-style:normal;color:#111;transform:scaleX(1.0447);transform-origin:0 0;">baseline_car4</div>
<div class="t s" style="left:42.75px;top:130.74px;font-family:'Liberation Sans';font-size:18.5px;font-weight:normal;font-style:normal;color:#111;transform:scaleX(1.0486);transform-origin:0 0;">Sign Top</div>
<div class="t s" style="left:171.01px;top:130.74px;font-family:'Liberation Sans';font-size:18.5px;font-weight:normal;font-style:normal;color:#111;transform:scaleX(1.0370);transform-origin:0 0;">12938</div>
<div class="t s" style="left:231.86px;top:130.74px;font-family:'Liberation Sans';font-size:18.5px;font-weight:normal;font-style:normal;color:#fff;transform:scaleX(1.0420);transform-origin:0 0;">Cambria</div>
<div class="t s" style="left:373.30px;top:128.07px;font-family:'Liberation Serif';font-size:22px;font-weight:normal;font-style:normal;color:#111;transform:scaleX(1.0500);transform-origin:0 0;">983155</div>
<div class="t s" style="left:42.75px;top:158.94px;font-family:'Liberation Sans';font-size:18.5px;font-weight:normal;font-style:normal;color:#111;transform:scaleX(1.0486);transform-origin:0 0;">Sign Top</div>
<div class="t s" style="left:171.01px;top:158.94px;font-family:'Liberation Sans';font-size:18.5px;font-weight:normal;font-style:normal;color:#111;transform:scaleX(1.0370);transform-origin:0 0;">13146</div>
<div class="t s" style="left:231.84px;top:158.94px;font-family:'Liberation Sans';font-size:18.5px;font-weight:normal;font-style:normal;color:#fff;transform:scaleX(1.0588);transform-origin:0 0;">Calibri</div>
<div class="t s" style="left:379.74px;top:158.94px;font-family:'Liberation Sans';font-size:18.5px;font-weight:normal;font-style:normal;color:#111;transform:scaleX(1.0370);transform-origin:0 0;">982573</div>
<div class="t s" style="left:42.72px;top:187.14px;font-family:'Liberation Sans';font-size:18.5px;font-weight:normal;font-style:normal;color:#111;transform:scaleX(1.0798);transform-origin:0 0;">Sign Bottom</div>
<div class="t s" style="left:171.01px;top:187.14px;font-family:'Liberation Sans';font-size:18.5px;font-weight:normal;font-style:normal;color:#111;transform:scaleX(1.0370);transform-origin:0 0;">12065</div>
<div class="t s" style="left:231.86px;top:187.14px;font-family:'Liberation Sans';font-size:18.5px;font-weight:normal;font-style:normal;color:#fff;transform:scaleX(1.0420);transform-origin:0 0;">Cambria</div>
<div class="t s" style="left:373.30px;top:184.47px;font-family:'Liberation Serif';font-size:22px;font-weight:normal;font-style:normal;color:#111;transform:scaleX(1.0500);transform-origin:0 0;">735965</div>
<div class="t s" style="left:513.64px;top:187.14px;font-family:'Liberation Sans';font-size:18.5px;font-weight:normal;font-style:normal;color:#111;transform:scaleX(1.0370);transform-origin:0 0;">100512</div>
<div class="t s" style="left:646.94px;top:187.14px;font-family:'Liberation Sans';font-size:18.5px;font-weight:normal;font-style:normal;color:#111;transform:scaleX(1.0370);transform-origin:0 0;">163756</div>
<div class="t s" style="left:42.72px;top:215.34px;font-family:'Liberation Sans';font-size:18.5px;font-weight:normal;font-style:normal;color:#111;transform:scaleX(1.0798);transform-origin:0 0;">Sign Bottom</div>
<div class="t s" style="left:181.38px;top:215.34px;font-family:'Liberation Sans';font-size:18.5px;font-weight:normal;font-style:normal;color:#111;transform:scaleX(1.0370);transform-origin:0 0;">5999</div>
<div class="t s" style="left:231.84px;top:215.34px;font-family:'Liberation Sans';font-size:18.5px;font-weight:normal;font-style:normal;color:#fff;transform:scaleX(1.0588);transform-origin:0 0;">Calibri</div>
<div class="t s" style="left:379.74px;top:215.34px;font-family:'Liberation Sans';font-size:18.5px;font-weight:normal;font-style:normal;color:#111;transform:scaleX(1.0370);transform-origin:0 0;">735451</div>
<div class="t s" style="left:524.01px;top:215.34px;font-family:'Liberation Sans';font-size:18.5px;font-weight:normal;font-style:normal;color:#111;transform:scaleX(1.0370);transform-origin:0 0;">99735</div>
<div class="t s" style="left:646.94px;top:215.34px;font-family:'Liberation Sans';font-size:18.5px;font-weight:normal;font-style:normal;color:#111;transform:scaleX(1.0370);transform-origin:0 0;">163390</div>
<div class="t s" style="left:42.72px;top:243.54px;font-family:'Liberation Sans';font-size:18.5px;font-weight:normal;font-style:normal;color:#111;transform:scaleX(1.0798);transform-origin:0 0;">Sign Bottom</div>
<div class="t s" style="left:171.01px;top:243.54px;font-family:'Liberation Sans';font-size:18.5px;font-weight:normal;font-style:normal;color:#111;transform:scaleX(1.0370);transform-origin:0 0;">12843</div>
<div class="t s" style="left:231.86px;top:243.54px;font-family:'Liberation Sans';font-size:18.5px;font-weight:normal;font-style:normal;color:#fff;transform:scaleX(1.0420);transform-origin:0 0;">Cambria</div>
<div class="t s" style="left:374.35px;top:240.88px;font-family:'Liberation Serif';font-size:22px;font-weight:normal;font-style:normal;color:#111;transform:scaleX(1.0500);transform-origin:0 0;">603001</div>
<div class="t s" style="left:512.61px;top:243.54px;font-family:'Liberation Sans';font-size:18.5px;font-weight:normal;font-style:normal;color:#111;transform:scaleX(1.0370);transform-origin:0 0;">153284</div>
<div class="t s" style="left:646.94px;top:243.54px;font-family:'Liberation Sans';font-size:18.5px;font-weight:normal;font-style:normal;color:#111;transform:scaleX(1.0370);transform-origin:0 0;">130947</div>
<div class="t s" style="left:779.71px;top:243.54px;font-family:'Liberation Sans';font-size:18.5px;font-weight:normal;font-style:normal;color:#111;transform:scaleX(1.0370);transform-origin:0 0;">153254</div>
<div class="t s" style="left:42.72px;top:271.74px;font-family:'Liberation Sans';font-size:18.5px;font-weight:normal;font-style:normal;color:#111;transform:scaleX(1.0798);transform-origin:0 0;">Sign Bottom</div>
<div class="t s" style="left:181.38px;top:271.74px;font-family:'Liberation Sans';font-size:18.5px;font-weight:normal;font-style:normal;color:#111;transform:scaleX(1.0370);transform-origin:0 0;">5442</div>
<div class="t s" style="left:231.84px;top:271.74px;font-family:'Liberation Sans';font-size:18.5px;font-weight:normal;font-style:normal;color:#fff;transform:scaleX(1.0588);transform-origin:0 0;">Calibri</div>
<div class="t s" style="left:379.74px;top:271.74px;font-family:'Liberation Sans';font-size:18.5px;font-weight:normal;font-style:normal;color:#111;transform:scaleX(1.0370);transform-origin:0 0;">602368</div>
<div class="t s" style="left:513.64px;top:271.74px;font-family:'Liberation Sans';font-size:18.5px;font-weight:normal;font-style:normal;color:#111;transform:scaleX(1.0370);transform-origin:0 0;">152327</div>
<div class="t s" style="left:646.94px;top:271.74px;font-family:'Liberation Sans';font-size:18.5px;font-weight:normal;font-style:normal;color:#111;transform:scaleX(1.0370);transform-origin:0 0;">130210</div>
<div class="t s" style="left:780.74px;top:271.74px;font-family:'Liberation Sans';font-size:18.5px;font-weight:normal;font-style:normal;color:#111;transform:scaleX(1.0370);transform-origin:0 0;">152600</div>
<div class="t s" style="left:42.72px;top:299.94px;font-family:'Liberation Sans';font-size:18.5px;font-weight:normal;font-style:normal;color:#111;transform:scaleX(1.0798);transform-origin:0 0;">Sign Bottom</div>
<div class="t s" style="left:192.79px;top:299.94px;font-family:'Liberation Sans';font-size:18.5px;font-weight:normal;font-style:normal;color:#111;transform:scaleX(1.0370);transform-origin:0 0;">767</div>
<div class="t s" style="left:231.86px;top:299.94px;font-family:'Liberation Sans';font-size:18.5px;font-weight:normal;font-style:normal;color:#fff;transform:scaleX(1.0420);transform-origin:0 0;">Cambria</div>
<div class="t s" style="left:373.30px;top:297.27px;font-family:'Liberation Serif';font-size:22px;font-weight:normal;font-style:normal;color:#111;transform:scaleX(1.0500);transform-origin:0 0;">463284</div>
<div class="t s" style="left:42.72px;top:328.14px;font-family:'Liberation Sans';font-size:18.5px;font-weight:normal;font-style:normal;color:#111;transform:scaleX(1.0798);transform-origin:0 0;">Sign Bottom</div>
<div class="t s" style="left:172.05px;top:328.14px;font-family:'Liberation Sans';font-size:18.5px;font-weight:normal;font-style:normal;color:#111;transform:scaleX(1.0370);transform-origin:0 0;">11557</div>
<div class="t s" style="left:231.84px;top:328.14px;font-family:'Liberation Sans';font-size:18.5px;font-weight:normal;font-style:normal;color:#fff;transform:scaleX(1.0588);transform-origin:0 0;">Calibri</div>
<div class="t s" style="left:379.74px;top:328.14px;font-family:'Liberation Sans';font-size:18.5px;font-weight:normal;font-style:normal;color:#111;transform:scaleX(1.0370);transform-origin:0 0;">463090</div>
<div class="t s" style="left:42.72px;top:356.34px;font-family:'Liberation Sans';font-size:18.5px;font-weight:normal;font-style:normal;color:#111;transform:scaleX(1.0798);transform-origin:0 0;">Sign Bottom</div>
<div class="t s" style="left:181.38px;top:356.34px;font-family:'Liberation Sans';font-size:18.5px;font-weight:normal;font-style:normal;color:#111;transform:scaleX(1.0370);transform-origin:0 0;">6120</div>
<div class="t s" style="left:231.86px;top:356.34px;font-family:'Liberation Sans';font-size:18.5px;font-weight:normal;font-style:normal;color:#fff;transform:scaleX(1.0420);transform-origin:0 0;">Cambria</div>
<div class="t s" style="left:373.30px;top:353.67px;font-family:'Liberation Serif';font-size:22px;font-weight:normal;font-style:normal;color:#111;transform:scaleX(1.0500);transform-origin:0 0;">444290</div>
<div class="t s" style="left:42.72px;top:384.54px;font-family:'Liberation Sans';font-size:18.5px;font-weight:normal;font-style:normal;color:#111;transform:scaleX(1.0798);transform-origin:0 0;">Sign Bottom</div>
<div class="t s" style="left:181.38px;top:384.54px;font-family:'Liberation Sans';font-size:18.5px;font-weight:normal;font-style:normal;color:#111;transform:scaleX(1.0370);transform-origin:0 0;">7357</div>
<div class="t s" style="left:231.84px;top:384.54px;font-family:'Liberation Sans';font-size:18.5px;font-weight:normal;font-style:normal;color:#fff;transform:scaleX(1.0588);transform-origin:0 0;">Calibri</div>
<div class="t s" style="left:379.74px;top:384.54px;font-family:'Liberation Sans';font-size:18.5px;font-weight:normal;font-style:normal;color:#111;transform:scaleX(1.0370);transform-origin:0 0;">443920</div>
<div class="t s" style="left:42.72px;top:412.74px;font-family:'Liberation Sans';font-size:18.5px;font-weight:normal;font-style:normal;color:#111;transform:scaleX(1.0798);transform-origin:0 0;">Sign Bottom</div>
<div class="t s" style="left:181.38px;top:412.74px;font-family:'Liberation Sans';font-size:18.5px;font-weight:normal;font-style:normal;color:#111;transform:scaleX(1.0370);transform-origin:0 0;">2324</div>
<div class="t s" style="left:231.86px;top:412.74px;font-family:'Liberation Sans';font-size:18.5px;font-weight:normal;font-style:normal;color:#fff;transform:scaleX(1.0420);transform-origin:0 0;">Cambria</div>
<div class="t s" style="left:374.35px;top:410.07px;font-family:'Liberation Serif';font-size:22px;font-weight:normal;font-style:normal;color:#111;transform:scaleX(1.0500);transform-origin:0 0;">417041</div>
<div class="t s" style="left:524.01px;top:412.74px;font-family:'Liberation Sans';font-size:18.5px;font-weight:normal;font-style:normal;color:#111;transform:scaleX(1.0370);transform-origin:0 0;">48826</div>
<div class="t s" style="left:647.98px;top:412.74px;font-family:'Liberation Sans';font-size:18.5px;font-weight:normal;font-style:normal;color:#111;transform:scaleX(1.0370);transform-origin:0 0;">119477</div>
<div class="t s" style="left:42.75px;top:440.94px;font-family:'Liberation Sans';font-size:18.5px;font-weight:normal;font-style:normal;color:#111;transform:scaleX(1.0486);transform-origin:0 0;">Sign Top</div>
<div class="t s" style="left:181.38px;top:440.94px;font-family:'Liberation Sans';font-size:18.5px;font-weight:normal;font-style:normal;color:#111;transform:scaleX(1.0370);transform-origin:0 0;">6297</div>
<div class="t s" style="left:231.84px;top:440.94px;font-family:'Liberation Sans';font-size:18.5px;font-weight:normal;font-style:normal;color:#fff;transform:scaleX(1.0588);transform-origin:0 0;">Calibri</div>
<div class="t s" style="left:379.74px;top:440.94px;font-family:'Liberation Sans';font-size:18.5px;font-weight:normal;font-style:normal;color:#111;transform:scaleX(1.0370);transform-origin:0 0;">416537</div>
<div class="t s" style="left:524.01px;top:440.94px;font-family:'Liberation Sans';font-size:18.5px;font-weight:normal;font-style:normal;color:#111;transform:scaleX(1.0370);transform-origin:0 0;">48813</div>
<div class="t s" style="left:647.98px;top:440.94px;font-family:'Liberation Sans';font-size:18.5px;font-weight:normal;font-style:normal;color:#111;transform:scaleX(1.0370);transform-origin:0 0;">118579</div>
<div class="t s" style="left:42.75px;top:469.14px;font-family:'Liberation Sans';font-size:18.5px;font-weight:normal;font-style:normal;color:#111;transform:scaleX(1.0486);transform-origin:0 0;">Sign Top</div>
<div class="t s" style="left:181.38px;top:469.14px;font-family:'Liberation Sans';font-size:18.5px;font-weight:normal;font-style:normal;color:#111;transform:scaleX(1.0370);transform-origin:0 0;">1895</div>
<div class="t s" style="left:231.86px;top:469.14px;font-family:'Liberation Sans';font-size:18.5px;font-weight:normal;font-style:normal;color:#fff;transform:scaleX(1.0420);transform-origin:0 0;">Cambria</div>
<div class="t s" style="left:373.30px;top:466.47px;font-family:'Liberation Serif';font-size:22px;font-weight:normal;font-style:normal;color:#111;transform:scaleX(1.0500);transform-origin:0 0;">409663</div>
<div class="t s" style="left:524.01px;top:469.14px;font-family:'Liberation Sans';font-size:18.5px;font-weight:normal;font-style:normal;color:#111;transform:scaleX(1.0370);transform-origin:0 0;">31578</div>
<div class="t s" style="left:657.31px;top:469.14px;font-family:'Liberation Sans';font-size:18.5px;font-weight:normal;font-style:normal;color:#111;transform:scaleX(1.0370);transform-origin:0 0;">95013</div>
<div class="t s" style="left:42.75px;top:497.34px;font-family:'Liberation Sans';font-size:18.5px;font-weight:normal;font-style:normal;color:#111;transform:scaleX(1.0486);transform-origin:0 0;">Sign Top</div>
<div class="t s" style="left:181.38px;top:497.34px;font-family:'Liberation Sans';font-size:18.5px;font-weight:normal;font-style:normal;color:#111;transform:scaleX(1.0370);transform-origin:0 0;">3821</div>
<div class="t s" style="left:231.84px;top:497.34px;font-family:'Liberation Sans';font-size:18.5px;font-weight:normal;font-style:normal;color:#fff;transform:scaleX(1.0588);transform-origin:0 0;">Calibri</div>
<div class="t s" style="left:379.74px;top:497.34px;font-family:'Liberation Sans';font-size:18.5px;font-weight:normal;font-style:normal;color:#111;transform:scaleX(1.0370);transform-origin:0 0;">409515</div>
<div class="t s" style="left:525.05px;top:497.34px;font-family:'Liberation Sans';font-size:18.5px;font-weight:normal;font-style:normal;color:#111;transform:scaleX(1.0370);transform-origin:0 0;">31134</div>
<div class="t s" style="left:657.31px;top:497.34px;font-family:'Liberation Sans';font-size:18.5px;font-weight:normal;font-style:normal;color:#111;transform:scaleX(1.0370);transform-origin:0 0;">95000</div>
<div class="t s" style="left:42.75px;top:525.54px;font-family:'Liberation Sans';font-size:18.5px;font-weight:normal;font-style:normal;color:#111;transform:scaleX(1.0486);transform-origin:0 0;">Sign Top</div>
<div class="t s" style="left:181.38px;top:525.54px;font-family:'Liberation Sans';font-size:18.5px;font-weight:normal;font-style:normal;color:#111;transform:scaleX(1.0370);transform-origin:0 0;">4819</div>
<div class="t s" style="left:231.86px;top:525.54px;font-family:'Liberation Sans';font-size:18.5px;font-weight:normal;font-style:normal;color:#fff;transform:scaleX(1.0420);transform-origin:0 0;">Cambria</div>
<div class="t s" style="left:373.30px;top:522.88px;font-family:'Liberation Serif';font-size:22px;font-weight:normal;font-style:normal;color:#111;transform:scaleX(1.0500);transform-origin:0 0;">403733</div>
<div class="t s" style="left:42.75px;top:553.74px;font-family:'Liberation Sans';font-size:18.5px;font-weight:normal;font-style:normal;color:#111;transform:scaleX(1.0486);transform-origin:0 0;">Sign Top</div>
<div class="t s" style="left:171.01px;top:553.74px;font-family:'Liberation Sans';font-size:18.5px;font-weight:normal;font-style:normal;color:#111;transform:scaleX(1.0370);transform-origin:0 0;">10804</div>
<div class="t s" style="left:231.84px;top:553.74px;font-family:'Liberation Sans';font-size:18.5px;font-weight:normal;font-style:normal;color:#fff;transform:scaleX(1.0588);transform-origin:0 0;">Calibri</div>
<div class="t s" style="left:379.74px;top:553.74px;font-family:'Liberation Sans';font-size:18.5px;font-weight:normal;font-style:normal;color:#111;transform:scaleX(1.0370);transform-origin:0 0;">402847</div>
<div class="t s" style="left:42.75px;top:581.94px;font-family:'Liberation Sans';font-size:18.5px;font-weight:normal;font-style:normal;color:#111;transform:scaleX(1.0486);transform-origin:0 0;">Sign Top</div>
<div class="t s" style="left:171.01px;top:581.94px;font-family:'Liberation Sans';font-size:18.5px;font-weight:normal;font-style:normal;color:#111;transform:scaleX(1.0370);transform-origin:0 0;">10181</div>
<div class="t s" style="left:231.86px;top:581.94px;font-family:'Liberation Sans';font-size:18.5px;font-weight:normal;font-style:normal;color:#fff;transform:scaleX(1.0420);transform-origin:0 0;">Cambria</div>
<div class="t s" style="left:374.35px;top:579.27px;font-family:'Liberation Serif';font-size:22px;font-weight:normal;font-style:normal;color:#111;transform:scaleX(1.0500);transform-origin:0 0;">395272</div>
<div class="t s" style="left:42.75px;top:610.14px;font-family:'Liberation Sans';font-size:18.5px;font-weight:normal;font-style:normal;color:#111;transform:scaleX(1.0486);transform-origin:0 0;">Sign Top</div>
<div class="t s" style="left:171.01px;top:610.14px;font-family:'Liberation Sans';font-size:18.5px;font-weight:normal;font-style:normal;color:#111;transform:scaleX(1.0370);transform-origin:0 0;">10650</div>
<div class="t s" style="left:231.84px;top:610.14px;font-family:'Liberation Sans';font-size:18.5px;font-weight:normal;font-style:normal;color:#fff;transform:scaleX(1.0588);transform-origin:0 0;">Calibri</div>
<div class="t s" style="left:379.74px;top:610.14px;font-family:'Liberation Sans';font-size:18.5px;font-weight:normal;font-style:normal;color:#111;transform:scaleX(1.0370);transform-origin:0 0;">394482</div>
<div class="t s" style="left:42.72px;top:638.34px;font-family:'Liberation Sans';font-size:18.5px;font-weight:normal;font-style:normal;color:#111;transform:scaleX(1.0798);transform-origin:0 0;">Sign Bottom</div>
<div class="t s" style="left:171.01px;top:638.34px;font-family:'Liberation Sans';font-size:18.5px;font-weight:normal;font-style:normal;color:#111;transform:scaleX(1.0370);transform-origin:0 0;">12845</div>
<div class="t s" style="left:231.86px;top:638.34px;font-family:'Liberation Sans';font-size:18.5px;font-weight:normal;font-style:normal;color:#fff;transform:scaleX(1.0420);transform-origin:0 0;">Cambria</div>
<div class="t s" style="left:373.30px;top:635.67px;font-family:'Liberation Serif';font-size:22px;font-weight:normal;font-style:normal;color:#111;transform:scaleX(1.0500);transform-origin:0 0;">365387</div>
<div class="t s" style="left:514.68px;top:638.34px;font-family:'Liberation Sans';font-size:18.5px;font-weight:normal;font-style:normal;color:#111;transform:scaleX(1.0370);transform-origin:0 0;">112247</div>
<div class="t s" style="left:657.31px;top:638.34px;font-family:'Liberation Sans';font-size:18.5px;font-weight:normal;font-style:normal;color:#111;transform:scaleX(1.0370);transform-origin:0 0;">49086</div>
<div class="t s" style="left:42.72px;top:666.54px;font-family:'Liberation Sans';font-size:18.5px;font-weight:normal;font-style:normal;color:#111;transform:scaleX(1.0798);transform-origin:0 0;">Sign Bottom</div>
<div class="t s" style="left:171.01px;top:666.54px;font-family:'Liberation Sans';font-size:18.5px;font-weight:normal;font-style:normal;color:#111;transform:scaleX(1.0370);transform-origin:0 0;">10362</div>
<div class="t s" style="left:231.84px;top:666.54px;font-family:'Liberation Sans';font-size:18.5px;font-weight:normal;font-style:normal;color:#fff;transform:scaleX(1.0588);transform-origin:0 0;">Calibri</div>
<div class="t s" style="left:378.71px;top:666.54px;font-family:'Liberation Sans';font-size:18.5px;font-weight:normal;font-style:normal;color:#111;transform:scaleX(1.0370);transform-origin:0 0;">364774</div>
<div class="t s" style="left:514.68px;top:666.54px;font-family:'Liberation Sans';font-size:18.5px;font-weight:normal;font-style:normal;color:#111;transform:scaleX(1.0370);transform-origin:0 0;">112123</div>
<div class="t s" style="left:657.31px;top:666.54px;font-family:'Liberation Sans';font-size:18.5px;font-weight:normal;font-style:normal;color:#111;transform:scaleX(1.0370);transform-origin:0 0;">48472</div>
<div class="t s" style="left:42.72px;top:694.74px;font-family:'Liberation Sans';font-size:18.5px;font-weight:normal;font-style:normal;color:#111;transform:scaleX(1.0798);transform-origin:0 0;">Sign Bottom</div>
<div class="t s" style="left:183.46px;top:694.74px;font-family:'Liberation Sans';font-size:18.5px;font-weight:normal;font-style:normal;color:#111;transform:scaleX(1.0370);transform-origin:0 0;">5117</div>
<div class="t s" style="left:231.86px;top:694.74px;font-family:'Liberation Sans';font-size:18.5px;font-weight:normal;font-style:normal;color:#fff;transform:scaleX(1.0420);transform-origin:0 0;">Cambria</div>
<div class="t s" style="left:373.30px;top:692.07px;font-family:'Liberation Serif';font-size:22px;font-weight:normal;font-style:normal;color:#111;transform:scaleX(1.0500);transform-origin:0 0;">359700</div>
<div class="t s" style="left:42.72px;top:722.94px;font-family:'Liberation Sans';font-size:18.5px;font-weight:normal;font-style:normal;color:#111;transform:scaleX(1.0798);transform-origin:0 0;">Sign Bottom</div>
<div class="t s" style="left:181.38px;top:722.94px;font-family:'Liberation Sans';font-size:18.5px;font-weight:normal;font-style:normal;color:#111;transform:scaleX(1.0370);transform-origin:0 0;">3779</div>
<div class="t s" style="left:231.84px;top:722.94px;font-family:'Liberation Sans';font-size:18.5px;font-weight:normal;font-style:normal;color:#fff;transform:scaleX(1.0588);transform-origin:0 0;">Calibri</div>
<div class="t s" style="left:379.74px;top:722.94px;font-family:'Liberation Sans';font-size:18.5px;font-weight:normal;font-style:normal;color:#111;transform:scaleX(1.0370);transform-origin:0 0;">359641</div>
<div class="t s" style="left:42.75px;top:751.14px;font-family:'Liberation Sans';font-size:18.5px;font-weight:normal;font-style:normal;color:#111;transform:scaleX(1.0486);transform-origin:0 0;">Sign Top</div>
<div class="t s" style="left:181.38px;top:751.14px;font-family:'Liberation Sans';font-size:18.5px;font-weight:normal;font-style:normal;color:#111;transform:scaleX(1.0370);transform-origin:0 0;">1510</div>
<div class="t s" style="left:231.86px;top:751.14px;font-family:'Liberation Sans';font-size:18.5px;font-weight:normal;font-style:normal;color:#fff;transform:scaleX(1.0420);transform-origin:0 0;">Cambria</div>
<div class="t s" style="left:373.30px;top:748.48px;font-family:'Liberation Serif';font-size:22px;font-weight:normal;font-style:normal;color:#111;transform:scaleX(1.0500);transform-origin:0 0;">358544</div>
<div class="t s" style="left:514.68px;top:751.14px;font-family:'Liberation Sans';font-size:18.5px;font-weight:normal;font-style:normal;color:#111;transform:scaleX(1.0370);transform-origin:0 0;">112660</div>
<div class="t s" style="left:657.31px;top:751.14px;font-family:'Liberation Sans';font-size:18.5px;font-weight:normal;font-style:normal;color:#111;transform:scaleX(1.0370);transform-origin:0 0;">40845</div>
<div class="t s" style="left:42.75px;top:779.34px;font-family:'Liberation Sans';font-size:18.5px;font-weight:normal;font-style:normal;color:#111;transform:scaleX(1.0486);transform-origin:0 0;">Sign Top</div>
<div class="t s" style="left:181.38px;top:779.34px;font-family:'Liberation Sans';font-size:18.5px;font-weight:normal;font-style:normal;color:#111;transform:scaleX(1.0370);transform-origin:0 0;">6129</div>
<div class="t s" style="left:231.84px;top:779.34px;font-family:'Liberation Sans';font-size:18.5px;font-weight:normal;font-style:normal;color:#fff;transform:scaleX(1.0588);transform-origin:0 0;">Calibri</div>
<div class="t s" style="left:379.74px;top:779.34px;font-family:'Liberation Sans';font-size:18.5px;font-weight:normal;font-style:normal;color:#111;transform:scaleX(1.0370);transform-origin:0 0;">358236</div>
<div class="t s" style="left:515.72px;top:779.34px;font-family:'Liberation Sans';font-size:18.5px;font-weight:normal;font-style:normal;color:#111;transform:scaleX(1.0370);transform-origin:0 0;">111823</div>
<div class="t s" style="left:657.31px;top:779.34px;font-family:'Liberation Sans';font-size:18.5px;font-weight:normal;font-style:normal;color:#111;transform:scaleX(1.0370);transform-origin:0 0;">40000</div>
<svg class="a" style="left:0;top:0" width="850" height="803"><rect x="327" y="188" width="5" height="466" fill="#FF0000"/><path d="M322.2 653.5h15.2l-7.6 15z" fill="#FF0000"/></svg>
<div class="t" style="left:340px;top:346px;width:30px;height:90px;"><div style="position:absolute;left:0;top:0;transform-origin:0 0;transform:translate(30px,0) rotate(90deg) scaleX(0.938);font-weight:bold;font-style:italic;font-size:30px;color:#FF0000;line-height:1;-webkit-text-stroke:0.5px #FF0000">sorted</div></div>
</body></html>
